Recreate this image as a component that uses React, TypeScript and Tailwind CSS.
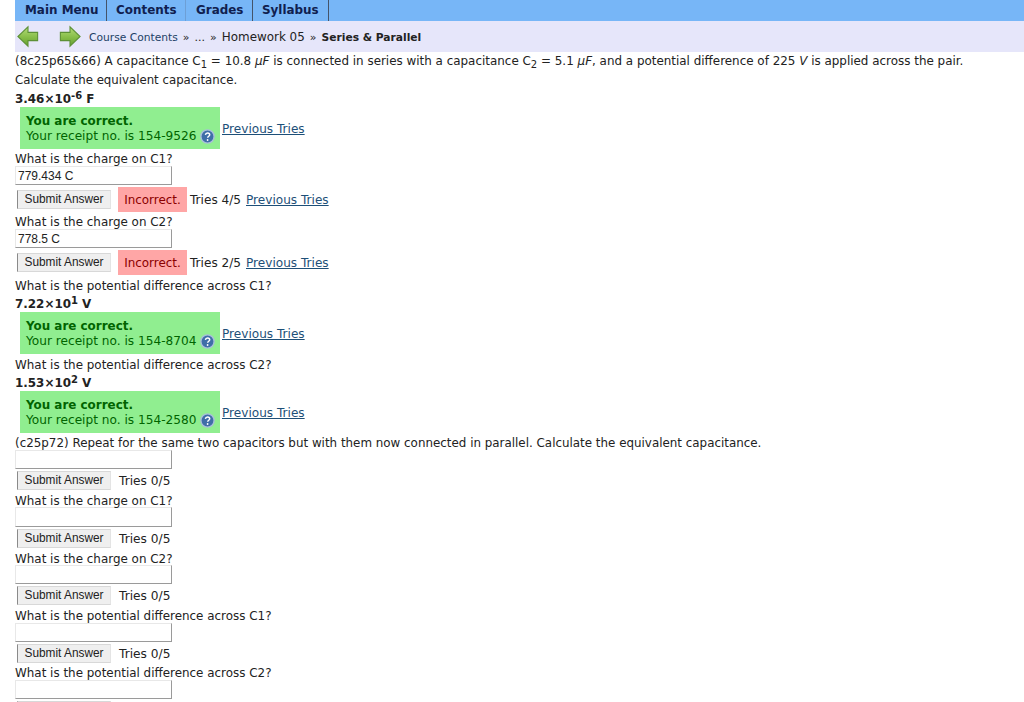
const font = "[font-family:'DejaVu_Sans',Verdana,sans-serif]";

function ArrowIcon({ right }: { right?: boolean }) {
  return (
    <svg width="22" height="23" viewBox="0 0 24 25" className={right ? "" : "-scale-x-100"}>
      <defs>
        <linearGradient id={right ? "gr" : "gl"} x1="0" y1="0" x2="0" y2="1">
          <stop offset="0" stopColor="#b4dc78" />
          <stop offset="0.55" stopColor="#86bd48" />
          <stop offset="1" stopColor="#649f30" />
        </linearGradient>
      </defs>
      <path d="M1.5 8H12V2L23 12.5 12 23V17H1.5Z" fill={`url(#${right ? "gr" : "gl"})`} stroke="#5d9136" strokeWidth="1.2" />
    </svg>
  );
}

function HelpIcon() {
  return (
    <svg width="15" height="15" viewBox="0 0 15 15" className="shrink-0">
      <circle cx="7.5" cy="7.5" r="6.6" fill="#3f6ea8" stroke="#a9bedb" strokeWidth="1.4" />
      <path d="M5.4 5.8c.2-1.3 1.1-1.9 2.2-1.9 1.2 0 2.1.7 2.1 1.8 0 1.5-2 1.6-2 3.1" fill="none" stroke="#fff" strokeWidth="1.5" />
      <circle cx="7.6" cy="11" r="0.9" fill="#fff" />
    </svg>
  );
}

function PrevLink() {
  return <span className="text-[12.1px] text-[#1d4f78] underline">Previous Tries</span>;
}

function Q({ children, h = "h-[19px]", pt = "" }: { children: React.ReactNode; h?: string; pt?: string }) {
  return <div className={`${h} ${pt} flex items-center whitespace-nowrap`}>{children}</div>;
}

function Answer({ children, h = "h-[18px]", pt = "pt-[4px]" }: { children: React.ReactNode; h?: string; pt?: string }) {
  return <div className={`${h} ${pt} flex items-center font-bold whitespace-nowrap`}>{children}</div>;
}

function Correct({ receipt }: { receipt: string }) {
  return (
    <div className="flex items-center ml-[5px]">
      <div className="w-[200px] h-[42px] bg-[#90ee90] text-[#006400] pl-[6px] pt-[7px] leading-[15px]">
        <div className="font-bold">You are correct.</div>
        <div className="flex items-center gap-[4px] whitespace-nowrap">
          <span className="text-[12.15px]">Your receipt no. is {receipt}</span>
          <HelpIcon />
        </div>
      </div>
      <span className="ml-[2px] pt-[3px]"><PrevLink /></span>
    </div>
  );
}

function Input({ value, h = "h-[19px]" }: { value?: string; h?: string }) {
  return (
    <div className={`w-[157px] ${h} bg-white border-r border-b border-[#9a9a9a] border-t-[1px] border-t-[#e8e8e8] border-l-[1px] border-l-[#e8e8e8] flex items-center pl-[2px] text-[12px] text-[#222] [font-family:'Liberation_Sans',Arial,sans-serif]`}>
      {value}
    </div>
  );
}

function SubmitBtn({ label = "Submit Answer" }: { label?: string }) {
  return (
    <div className="w-[94px] h-[19px] ml-[2px] shrink-0 bg-[#efefef] border-l border-t border-l-[#8a8a8a] border-t-[#d8d8d8] border-b border-b-[#d8d8d8] border-r border-r-[#e4e4e4] flex items-center justify-center text-[11.85px] text-[#222] [font-family:'Liberation_Sans',Arial,sans-serif]">
      {label}
    </div>
  );
}

function Wrong({ tries }: { tries: string }) {
  return (
    <div className="h-[25px] flex items-center mt-[2px] whitespace-nowrap">
      <SubmitBtn />
      <div className="ml-[7px] w-[69px] h-[25px] pt-[2px] bg-[#ffa6a6] text-[#8b0000] flex items-center justify-center">Incorrect.</div>
      <span className="ml-[3px] mr-[5px] pt-[2px] text-[12.1px]">Tries {tries}</span>
      <span className="pt-[2px]"><PrevLink /></span>
    </div>
  );
}

function Fresh() {
  return (
    <div className="h-[19px] mt-[2px] flex items-center whitespace-nowrap">
      <SubmitBtn />
      <span className="ml-[8px] pt-[2px] text-[12.2px]">Tries 0/5</span>
    </div>
  );
}

const sub = "text-[10px] relative top-[3px] leading-none";
const sup = "text-[10px] relative -top-[4px] leading-none";

export default function App() {
  return (
    <div className={`${font} w-[1024px] h-[702px] overflow-hidden bg-white pl-[15px] text-[11.93px] text-[#222]`}>
      <div className="h-[21px] bg-[#77b6f7] flex font-bold text-[#10204f]">
        <div className="w-[92px] pl-[10px] pt-[1px] flex items-center border-r border-[#44546a]">Main Menu</div>
        <div className="w-[79px] pl-[9px] pt-[1px] flex items-center border-r border-[#6d9fd6]">Contents</div>
        <div className="w-[67px] pl-[10px] pt-[1px] flex items-center border-r border-[#44546a]">Grades</div>
        <div className="w-[76px] pl-[9px] pt-[1px] flex items-center border-r border-[#44546a]">Syllabus</div>
      </div>
      <div className="h-[31px] bg-[#e6e6fa] flex items-center whitespace-nowrap">
        <div className="ml-[2px]"><ArrowIcon /></div>
        <div className="ml-[20px]"><ArrowIcon right /></div>
        <div className="flex items-center pt-[3px]">
          <span className="ml-[8px] text-[10.7px] text-[#1d3f66]">Course Contents</span>
          <span className="ml-[5px] text-[11px]">»</span>
          <span className="ml-[5px] text-[11px]">...</span>
          <span className="ml-[5px] text-[11px]">»</span>
          <span className="ml-[5px]">Homework 05</span>
          <span className="ml-[5px] text-[11px]">»</span>
          <span className="ml-[5px] text-[10.7px] font-bold">Series &amp; Parallel</span>
        </div>
      </div>
      <Q>
        <span>
          (8c25p65&amp;66) A capacitance C<sub className={sub}>1</sub> = 10.8 <i>μF</i> is connected in series with a capacitance C<sub className={sub}>2</sub> = 5.1 <i>μF</i>, and a potential difference of 225 <i>V</i> is applied across the pair.
        </span>
      </Q>
      <Q><span className="text-[11.75px]">Calculate the equivalent capacitance.</span></Q>
      <Answer h="h-[17px]" pt="pt-[2px]"><span>3.46×10<sup className={sup}>-6</sup> F</span></Answer>
      <Correct receipt="154-9526" />

      <Q h="h-[17px]" pt="pt-[4px]">What is the charge on C1?</Q>
      <Input value="779.434 C" />
      <Wrong tries="4/5" />
      <Q h="h-[17px]" pt="pt-[4px]">What is the charge on C2?</Q>
      <Input value="778.5 C" />
      <Wrong tries="2/5" />
      <Q pt="pt-[4px]">What is the potential difference across C1?</Q>
      <Answer><span>7.22×10<sup className={sup}>1</sup> V</span></Answer>
      <Correct receipt="154-8704" />
      <Q pt="pt-[4px]">What is the potential difference across C2?</Q>
      <Answer><span>1.53×10<sup className={sup}>2</sup> V</span></Answer>
      <Correct receipt="154-2580" />
      <Q h="h-[17px]" pt="pt-[4px]"><span className="text-[11.9px]">(c25p72) Repeat for the same two capacitors but with them now connected in parallel. Calculate the equivalent capacitance.</span></Q>
      <Input />
      <Fresh />
      <Q h="h-[17px]" pt="pt-[6px]">What is the charge on C1?</Q>
      <Input h="h-[20px]" />
      <Fresh />
      <Q h="h-[17px]" pt="pt-[6px]">What is the charge on C2?</Q>
      <Input />
      <Fresh />
      <Q h="h-[18px]" pt="pt-[5px]">What is the potential difference across C1?</Q>
      <Input />
      <Fresh />
      <Q h="h-[17px]" pt="pt-[5px]">What is the potential difference across C2?</Q>
      <Input />
      <div className="mt-[2px]"><SubmitBtn label="" /></div>
    </div>
  );
}
